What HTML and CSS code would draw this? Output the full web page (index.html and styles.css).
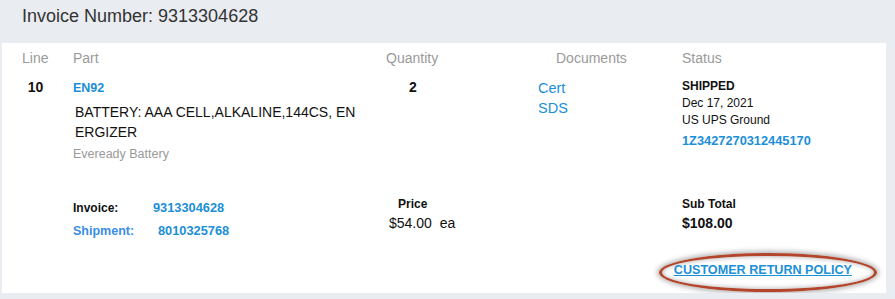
FILE: index.html
```html
<!DOCTYPE html>
<html lang="en">
  <head>
    <meta charset="UTF-8" />
    <meta name="viewport" content="width=device-width, initial-scale=1.0" />
    <title>Invoice 9313304628</title>

    <link rel="stylesheet" href="styles.css">
  </head>
  <body>
    <h2 class="invoice-title">Invoice Number: 9313304628</h2>

    <div class="card">
      <div class="grid head">
        <div class="line-head">Line</div>
        <div>Part</div>
        <div>Quantity</div>
        <div class="docs-head">Documents</div>
        <div>Status</div>
      </div>

      <div class="grid item">
        <div class="line-no">10</div>
        <div class="part">
          <a class="part-no" href="#">EN92</a>
          <p class="part-desc">BATTERY: AAA CELL,ALKALINE,144CS, ENERGIZER</p>
          <p class="part-maker">Eveready Battery</p>
        </div>
        <div class="qty">2</div>
        <div class="docs">
          <a href="#">Cert</a>
          <a href="#">SDS</a>
        </div>
        <div class="status">
          <p class="status-name">SHIPPED</p>
          <p>Dec 17, 2021</p>
          <p>US UPS Ground</p>
          <a class="tracking" href="#">1Z3427270312445170</a>
        </div>
      </div>

      <div class="grid summary">
        <div></div>
        <div class="refs">
          <div class="ref-row">
            <span class="ref-label">Invoice:</span>
            <a class="ref-value" href="#">9313304628</a>
          </div>
          <div class="ref-row">
            <a class="ref-label blue" href="#">Shipment:</a>
            <a class="ref-value shifted" href="#">8010325768</a>
          </div>
        </div>
        <div class="price">
          <p class="price-label">Price</p>
          <p class="price-value">$54.00 <span class="unit">ea</span></p>
        </div>
        <div></div>
        <div class="subtotal">
          <p class="subtotal-label">Sub Total</p>
          <p class="subtotal-value">$108.00</p>
        </div>
      </div>

      <div class="policy">
        <a class="policy-link" href="#">CUSTOMER RETURN POLICY</a>
      </div>
    </div>
  </body>
</html>
```

FILE: styles.css
```css
* {
  margin: 0;
  padding: 0;
  box-sizing: border-box;
}

body {
  background-color: #e9ecf1;
  font-family: "Liberation Sans", Arial, sans-serif;
  color: #111;
}

a {
  color: #1b8fd8;
  text-decoration: none;
}

.invoice-title {
  font-size: 18px;
  font-weight: normal;
  line-height: 22px;
  color: #333;
  padding: 5px 22px 16px;
}

.card {
  background-color: #fff;
  margin-left: 2px;
  width: 884px;
  padding: 7px 0 1px 20px;
}

.grid {
  display: grid;
  grid-template-columns: 51px 313px 152px 144px 1fr;
}

.head {
  font-size: 14px;
  line-height: 16px;
  color: #9a9a9a;
}

.docs-head {
  padding-left: 18px;
}

.item {
  margin-top: 12px;
}

.line-no {
  width: 27px;
  text-align: center;
  font-size: 14px;
  font-weight: bold;
  line-height: 18px;
}

.part-no {
  display: block;
  font-size: 12.5px;
  font-weight: bold;
  line-height: 20px;
}

.part-desc {
  width: 286px;
  margin-top: 4px;
  padding-left: 2px;
  font-size: 14px;
  line-height: 20px;
  word-break: break-all;
}

.part-maker {
  margin-top: 4px;
  font-size: 12.5px;
  line-height: 16px;
  color: #999;
}

.qty {
  width: 54px;
  text-align: center;
  font-size: 14px;
  font-weight: bold;
  line-height: 18px;
}

.docs a {
  display: block;
  font-size: 14.5px;
  line-height: 20px;
}

.status {
  font-size: 12px;
  line-height: 17px;
}

.status-name {
  font-weight: bold;
}

.tracking {
  display: block;
  margin-top: 3px;
  font-size: 12.8px;
  font-weight: bold;
}

.summary {
  margin-top: 34px;
}

.refs {
  padding-top: 3px;
}

.ref-row {
  display: flex;
  font-size: 12px;
  font-weight: bold;
  line-height: 18px;
}

.ref-row + .ref-row {
  margin-top: 5px;
}

.ref-label {
  width: 80px;
  color: #111;
}

.ref-label.blue {
  color: #3a8ee6;
  font-size: 12.5px;
}

.ref-value {
  font-size: 12.8px;
}

.ref-value.shifted {
  padding-left: 5px;
}

.price {
  padding-left: 3px;
}

.price-label {
  padding-left: 9px;
  font-size: 12px;
  font-weight: bold;
  line-height: 17px;
}

.price-value {
  font-size: 14px;
  line-height: 20px;
}

.unit {
  margin-left: 4px;
}

.subtotal-label {
  font-size: 12px;
  font-weight: bold;
  line-height: 17px;
}

.subtotal-value {
  font-size: 14px;
  font-weight: bold;
  line-height: 20px;
}

.policy {
  display: flex;
  justify-content: flex-end;
  margin-top: 13px;
  padding-right: 9px;
}

.policy-link {
  display: inline-block;
  padding: 6px 22px 10px 12px;
  border: 3.5px solid #b3452d;
  border-radius: 50%;
  font-size: 12.6px;
  font-weight: bold;
  line-height: 17px;
  text-decoration: underline;
  box-shadow: 0 0 5px 2px rgba(0, 0, 0, 0.3), inset 0 0 4px 1px rgba(0, 0, 0, 0.25);
}
```
